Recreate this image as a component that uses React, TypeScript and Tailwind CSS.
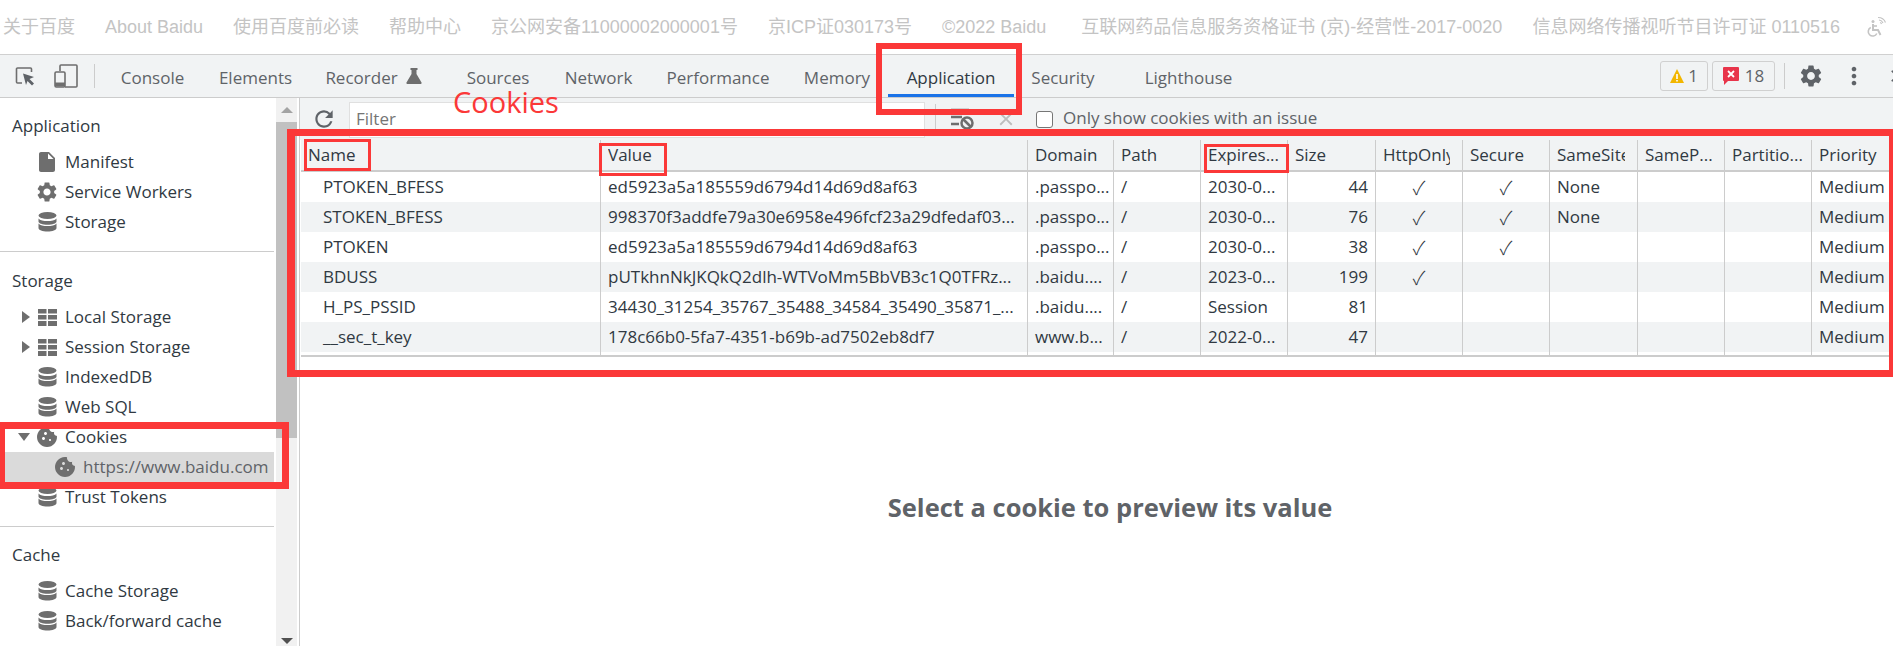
import { MdCookie, MdInsertDriveFile, MdRefresh, MdSettings, MdClose, MdMoreVert } from "react-icons/md";

const footerLinks = [
  "关于百度",
  "About Baidu",
  "使用百度前必读",
  "帮助中心",
  "京公网安备11000002000001号",
  "京ICP证030173号",
  "©2022 Baidu",
];

const tabs = [
  { label: "Console", w: "w-[99px]" },
  { label: "Elements", w: "w-[107px]" },
  { label: "Recorder", w: "w-[140px] pr-[11px]", flask: true },
  { label: "Sources", w: "w-[98px]" },
  { label: "Network", w: "w-[103px]" },
  { label: "Performance", w: "w-[136px]" },
  { label: "Memory", w: "w-[102px]" },
  { label: "Application", w: "w-[126px]", active: true },
  { label: "Security", w: "w-[113px] pr-[15px]" },
  { label: "Lighthouse", w: "w-[123px]" },
];

const gridCols =
  "grid grid-cols-[300px_427px_86px_87px_87px_88px_87px_87px_88px_87px_87px_80px]";

const columns = [
  "Name",
  "Value",
  "Domain",
  "Path",
  "Expires...",
  "Size",
  "HttpOnly",
  "Secure",
  "SameSite",
  "SameP...",
  "Partitio...",
  "Priority",
];

const cookies = [
  ["PTOKEN_BFESS", "ed5923a5a185559d6794d14d69d8af63", ".passpo...", "/", "2030-0...", "44", "✓", "✓", "None", "", "", "Medium"],
  ["STOKEN_BFESS", "998370f3addfe79a30e6958e496fcf23a29dfedaf03...", ".passpo...", "/", "2030-0...", "76", "✓", "✓", "None", "", "", "Medium"],
  ["PTOKEN", "ed5923a5a185559d6794d14d69d8af63", ".passpo...", "/", "2030-0...", "38", "✓", "✓", "", "", "", "Medium"],
  ["BDUSS", "pUTkhnNkJKQkQ2dlh-WTVoMm5BbVB3c1Q0TFRz...", ".baidu....", "/", "2023-0...", "199", "✓", "", "", "", "", "Medium"],
  ["H_PS_PSSID", "34430_31254_35767_35488_34584_35490_35871_...", ".baidu....", "/", "Session", "81", "", "", "", "", "", "Medium"],
  ["__sec_t_key", "178c66b0-5fa7-4351-b69b-ad7502eb8df7", "www.b...", "/", "2022-0...", "47", "", "", "", "", "", "Medium"],
];

function DbIcon() {
  return (
    <svg width="19" height="20" viewBox="0 0 19 20" className="shrink-0" fill="#6e6e6e">
      <ellipse cx="9.5" cy="3.5" rx="9" ry="3.5" />
      <path d="M.5 6.5c1.5 1.8 5 2.6 9 2.6s7.500-.8 9-2.600v3c0 1.900-4 3.300-9 3.300s-9-1.400-9-3.300z" />
      <path d="M.5 11.500c1.500 1.800 5 2.600 9 2.600s7.500-.8 9-2.600v4.500c0 2-4 3.500-9 3.500s-9-1.500-9-3.500z" />
    </svg>
  );
}

function TableIcon() {
  return (
    <svg width="19" height="17" viewBox="0 0 19 17" className="shrink-0" fill="#6e6e6e">
      <rect x="0" y="0" width="8.500" height="4.500" />
      <rect x="10" y="0" width="9" height="4.500" />
      <rect x="0" y="6" width="8.500" height="4.500" />
      <rect x="10" y="6" width="9" height="4.500" />
      <rect x="0" y="12" width="8.500" height="5" />
      <rect x="10" y="12" width="9" height="5" />
    </svg>
  );
}

function InspectIcon() {
  return (
    <svg width="21" height="20" viewBox="0 0 21 20" fill="none">
      <path d="M7 17H2.500A1 1 0 0 1 1.500 16V3A1 1 0 0 1 2.500 2h13a1 1 0 0 1 1 1v3" stroke="#6e6e6e" strokeWidth="1.600" />
      <path d="M8 7.500l11 3.500-4.500 2 4.500 4.500-2 2-4.500-4.500-1.500 4z" fill="#5f6368" />
    </svg>
  );
}

function DeviceIcon() {
  return (
    <svg width="24" height="24" viewBox="0 0 24 24" fill="none" stroke="#6e6e6e" strokeWidth="1.600">
      <path d="M6 7V2A1 1 0 0 1 7 1h15a1 1 0 0 1 1 1v20a1 1 0 0 1-1 1H11" />
      <rect x="1" y="8" width="10" height="15" rx="1.200" />
      <path d="M1 20.500h10" strokeWidth="4" />
    </svg>
  );
}

function ClearIcon() {
  return (
    <svg width="24" height="22" viewBox="0 0 24 22" fill="none">
      <path d="M0 2h18M0 9h11M0 16h8" stroke="#6e6e6e" strokeWidth="2.500" />
      <circle cx="16" cy="15" r="5.500" stroke="#6e6e6e" strokeWidth="2.500" />
      <path d="M12 11l8 8" stroke="#6e6e6e" strokeWidth="2.500" />
    </svg>
  );
}

function AccessIcon() {
  return (
    <svg width="20" height="22" viewBox="0 0 20 22" fill="none" stroke="#c4c4c4">
      <circle cx="6" cy="5.500" r="1.500" fill="#c4c4c4" stroke="none" />
      <path d="M6 8v6h5l2.500 5" strokeWidth="2" />
      <path d="M6 10h4" strokeWidth="1.600" />
      <path d="M3.800 11.500a4.500 4.500 0 1 0 6 6" strokeWidth="1.600" />
      <path d="M11 1.500a8 8 0 0 1 7.500 5M12 4a5 5 0 0 1 4 3M13 6.500a2 2 0 0 1 1.500 1.500" strokeWidth="1.200" />
    </svg>
  );
}

function SidebarRow({
  icon,
  label,
  arrow,
  selected,
}: {
  icon: React.ReactNode;
  label: string;
  arrow?: "right" | "down";
  selected?: boolean;
}) {
  return (
    <div className={`flex h-[30px] w-[274px] items-center whitespace-nowrap ${selected ? "bg-[#dadada]" : ""}`}>
      <div className="flex w-[38px] shrink-0 justify-end pr-[8px]">
        {arrow === "right" && (
          <div className="h-0 w-0 border-y-[6px] border-l-[8px] border-y-transparent border-l-[#6e6e6e]" />
        )}
        {arrow === "down" && (
          <div className="h-0 w-0 border-x-[6px] border-t-[8px] border-x-transparent border-t-[#6e6e6e]" />
        )}
      </div>
      {selected && <div className="w-[18px] shrink-0" />}
      <div className="flex w-[27px] shrink-0 items-center">{icon}</div>
      <span className={`pb-px ${selected ? "text-[#5f6368]" : "text-[#303942]"}`}>{label}</span>
    </div>
  );
}

function SectionTitle({ label }: { label: string }) {
  return <div className="mb-[6px] flex h-[30px] items-center pb-px pl-[12px] text-[#303942]">{label}</div>;
}

function Sidebar() {
  return (
    <aside className="flex h-full w-[300px] shrink-0 border-r border-[#cccccc] pr-px">
      <div className="w-[276px] shrink-0 overflow-hidden pt-[13px]">
        <SectionTitle label="Application" />
        <SidebarRow icon={<MdInsertDriveFile size={24} color="#6e6e6e" className="-ml-[3px]" />} label="Manifest" />
        <SidebarRow icon={<MdSettings size={24} color="#6e6e6e" className="-ml-[3px]" />} label="Service Workers" />
        <SidebarRow icon={<DbIcon />} label="Storage" />
        <div className="mt-[14px] mb-[14px] h-px w-[274px] bg-[#cccccc]" />
        <SectionTitle label="Storage" />
        <SidebarRow icon={<TableIcon />} label="Local Storage" arrow="right" />
        <SidebarRow icon={<TableIcon />} label="Session Storage" arrow="right" />
        <SidebarRow icon={<DbIcon />} label="IndexedDB" />
        <SidebarRow icon={<DbIcon />} label="Web SQL" />
        <SidebarRow icon={<MdCookie size={24} color="#6e6e6e" className="-ml-[3px]" />} label="Cookies" arrow="down" />
        <SidebarRow icon={<MdCookie size={24} color="#6e6e6e" className="-ml-[3px]" />} label="https://www.baidu.com" selected />
        <SidebarRow icon={<DbIcon />} label="Trust Tokens" />
        <div className="mt-[14px] mb-[13px] h-px w-[274px] bg-[#cccccc]" />
        <SectionTitle label="Cache" />
        <SidebarRow icon={<DbIcon />} label="Cache Storage" />
        <SidebarRow icon={<DbIcon />} label="Back/forward cache" />
      </div>
      <div className="relative w-[21px] shrink-0 bg-[#f1f1f1]">
        <div className="flex h-[24px] items-center justify-center">
          <div className="h-0 w-0 border-x-[6px] border-b-[6px] border-x-transparent border-b-[#a3a3a3]" />
        </div>
        <div className="h-[316px] bg-[#c1c1c1]" />
        <div className="absolute bottom-[2px] left-0 flex w-full justify-center">
          <div className="h-0 w-0 border-x-[6px] border-t-[6px] border-x-transparent border-t-[#505050]" />
        </div>
      </div>
    </aside>
  );
}

function CookieTable() {
  return (
    <div className="ml-px">
      <div className={`${gridCols} h-[32px] border-b-2 border-[#cccccc] bg-[#f1f3f4]`}>
        {columns.map((c) => (
          <div
            key={c}
            className={`flex items-center overflow-hidden border-r border-[#cccccc] pl-[7px] whitespace-nowrap text-[#303942] last:border-r-0 ${
              c === "HttpOnly" || c === "SameSite" ? "pr-[12px]" : "pr-[5px]"
            }`}
          >
            <span className="overflow-hidden">{c}</span>
          </div>
        ))}
      </div>
      {cookies.map((row, i) => (
        <div key={row[0]} className={`${gridCols} h-[30px] ${i % 2 === 1 ? "bg-[#f1f3f4]" : "bg-white"}`}>
          {row.map((v, j) => (
            <div
              key={j}
              className={[
                "flex items-center overflow-hidden border-r border-[#cccccc] px-[7px] whitespace-nowrap text-[#303942] last:border-r-0",
                j === 0 ? "pl-[22px]" : "",
                j === 5 ? "justify-end" : "",
                j === 6 || j === 7 ? "justify-center [font-family:'Noto_Sans_CJK_SC',sans-serif] text-[19px] font-light text-[#1b4f8f]" : "",
              ].join(" ")}
            >
              {v}
            </div>
          ))}
        </div>
      ))}
      <div className={`${gridCols} h-[3px] border-b-2 border-[#cccccc] box-content`}>
        {columns.map((c) => (
          <div key={c} className="border-r border-[#cccccc] last:border-r-0" />
        ))}
      </div>
    </div>
  );
}

export default function App() {
  return (
    <div className="relative flex h-[646px] w-[1893px] flex-col overflow-hidden bg-white text-[17px] [font-family:'Open_Sans','Noto_Sans_CJK_SC',sans-serif]">
      {/* page behind devtools */}
      <div className="flex h-[55px] shrink-0 items-center gap-[30px] border-b border-[#d0d0d0] pl-[3px] text-[18px] whitespace-nowrap text-[#c4c4c4] [font-family:'Liberation_Sans','Noto_Sans_CJK_SC',sans-serif]">
        {footerLinks.map((t) => (
          <span key={t}>{t}</span>
        ))}
        <span className="ml-[5px]">互联网药品信息服务资格证书 (京)-经营性-2017-0020</span>
        <span>信息网络传播视听节目许可证 0110516</span>
        <div className="-ml-[3px]"><AccessIcon /></div>
      </div>

      {/* devtools tab bar */}
      <div className="flex h-[43px] shrink-0 items-center border-b border-[#cccccc] bg-[#f1f3f4]">
        <div className="ml-[15px] flex w-[39px] shrink-0"><InspectIcon /></div>
        <DeviceIcon />
        <div className="mx-[16px] h-[24px] w-px bg-[#cccccc]" />
        <div className="-ml-[8px] flex h-full">
          {tabs.map((t) => (
            <div
              key={t.label}
              className={`flex h-full items-center justify-center whitespace-nowrap ${t.w} ${
                t.active ? "border-b-[3px] border-[#1a73e8] pt-[6px] text-[#303942]" : "pt-[3px] text-[#5f6368]"
              }`}
            >
              {t.label}
              {t.flask && (
                <svg width="16" height="16" viewBox="0 0 16 16" className="mb-[3px] ml-[8px]" fill="#6e6e6e">
                  <path d="M4.500 0h7v2h-1v4l5 8.500a1 1 0 0 1-1 1.500h-13a1 1 0 0 1-1-1.500l5-8.500V2h-1z" />
                </svg>
              )}
            </div>
          ))}
        </div>
        <div className="ml-auto flex items-center">
          <div className="flex h-[30px] w-[48px] items-center justify-center gap-[4px] rounded-[3px] border border-[#d0d0d0] text-[#5f6368]">
            <svg width="14" height="14" viewBox="0 0 14 14">
              <path d="M7 0l7 14H0z" fill="#f2b600" />
              <path d="M6.200 5h1.600v5H6.200zM6.200 11h1.600v1.500H6.200z" fill="#fff" />
            </svg>
            1
          </div>
          <div className="ml-[4px] flex h-[30px] w-[63px] items-center justify-center gap-[6px] rounded-[3px] border border-[#d0d0d0] text-[#5f6368]">
            <svg width="16" height="18" viewBox="0 0 16 18">
              <path d="M1 0h14a1 1 0 0 1 1 1v12a1 1 0 0 1-1 1H5l-4 4V14a1 1 0 0 1-1-1V1a1 1 0 0 1 1-1z" fill="#e8344a" />
              <path d="M5 4l6 6M11 4l-6 6" stroke="#fff" strokeWidth="1.800" />
            </svg>
            18
          </div>
          <div className="mx-[9px] h-[26px] w-px bg-[#cccccc]" />
          <MdSettings size={26} color="#5f6368" className="ml-[4px]" />
          <MdMoreVert size={28} color="#5f6368" className="ml-[16px]" />
          <MdClose size={20} color="#5f6368" className="-mr-[14px] ml-[19px]" />
        </div>
      </div>

      <div className="flex min-h-0 flex-1">
        <Sidebar />
        <main className="flex min-w-0 flex-1 flex-col">
          <div className="flex h-[42px] shrink-0 items-center bg-[#f1f3f4]">
            <MdRefresh size={26} color="#5f6368" className="ml-[11px]" />
            <div className="mt-[4px] ml-[12px] flex h-[36px] w-[576px] items-center self-start border border-[#e0e0e0] bg-white pb-[3px] pl-[6px] text-[#757575]">
              Filter
            </div>
            <div className="ml-[10px] h-[30px] w-px bg-[#cccccc]" />
            <div className="ml-[15px]"><ClearIcon /></div>
            <MdClose size={22} color="#bdbdbd" className="ml-[20px]" />
            <div className="ml-[19px] h-[17px] w-[17px] rounded-[3px] border border-[#767676] bg-white" />
            <span className="ml-[10px] whitespace-nowrap pb-[2px] text-[#5f6368]">Only show cookies with an issue</span>
          </div>
          <CookieTable />
          <div className="flex flex-1 items-center justify-center pt-[12px] pl-[27px]">
            <span className="text-[25.5px] font-bold text-[#5f6368]">Select a cookie to preview its value</span>
          </div>
        </main>
      </div>

      {/* red annotations drawn over the screenshot */}
      <div className="pointer-events-none absolute top-[43px] left-[876px] h-[72px] w-[146px] border-[6px] border-[#fb3838]" />
      <div className="pointer-events-none absolute top-[129px] left-[287px] h-[248px] w-[1606px] border-y-[7px] border-r-[4px] border-l-[8px] border-[#fb3838]" />
      <div className="pointer-events-none absolute top-[422px] left-0 h-[67px] w-[289px] border-y-[7px] border-r-[7px] border-l-[5px] border-[#fb3838]" />
      <div className="pointer-events-none absolute top-[139px] left-[304px] h-[32px] w-[67px] border-[3px] border-[#fb3838]" />
      <div className="pointer-events-none absolute top-[143px] left-[599px] h-[33px] w-[68px] border-[3px] border-[#fb3838]" />
      <div className="pointer-events-none absolute top-[144px] left-[1204px] h-[29px] w-[85px] border-[3px] border-[#fb3838]" />
      <div className="pointer-events-none absolute top-[83px] left-[453px] text-[29px] leading-[38px] text-[#fb3838]">Cookies</div>
    </div>
  );
}
